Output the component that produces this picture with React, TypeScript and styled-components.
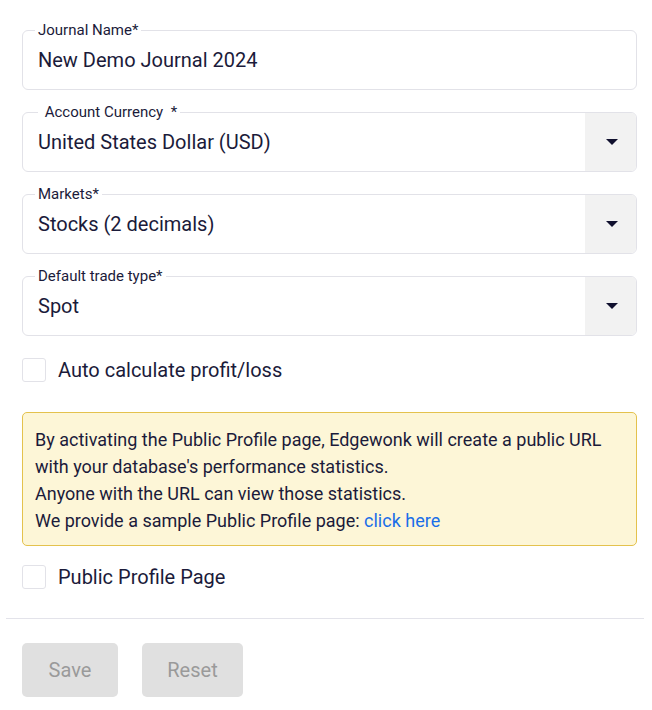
import React, { useState } from "react";
import styled, { createGlobalStyle } from "styled-components";

const GlobalStyle = createGlobalStyle`
  body {
    margin: 0;
    background: #ffffff;
    font-family: Roboto, "Liberation Sans", Arial, sans-serif;
    color: #1b1b3a;
  }
  * {
    box-sizing: border-box;
  }
`;

const Page = styled.div`
  padding: 0 8px 0 6px;
`;

const Form = styled.form`
  padding: 30px 7px 0 16px;
  display: flex;
  flex-direction: column;
`;

const Field = styled.div`
  position: relative;
  margin: 0 0 22px;
  height: 60px;
  border: 1px solid #e2e2e8;
  border-radius: 6px;
  display: flex;
  align-items: stretch;
`;

const Legend = styled.span<{ $indent?: number }>`
  position: absolute;
  top: -11px;
  left: ${(p) => p.$indent ?? 12}px;
  padding: 0 3px;
  background: #ffffff;
  font-size: 15px;
  line-height: 20px;
  color: #1b1b3a;
  white-space: pre;
`;

const Value = styled.div`
  flex: 1;
  display: flex;
  align-items: center;
  padding: 0 15px;
  font-size: 20px;
  color: #1b1b3a;
`;

const Toggle = styled.div`
  width: 51px;
  background: #f2f2f2;
  border-radius: 0 5px 5px 0;
  display: flex;
  align-items: center;
  justify-content: center;
`;

const Arrow = styled.span`
  width: 0;
  height: 0;
  border-left: 6px solid transparent;
  border-right: 6px solid transparent;
  border-top: 6px solid #10102e;
  margin-left: 2px;
`;

const CheckRow = styled.label`
  display: flex;
  align-items: center;
  gap: 12px;
  font-size: 20px;
  color: #1b1b3a;
  cursor: pointer;
`;

const Box = styled.span`
  width: 24px;
  height: 24px;
  border: 1px solid #e2e2e8;
  border-radius: 3px;
  background: #ffffff;
`;

const Notice = styled.div`
  margin: 30px 0 19px;
  padding: 13px 12px 11px;
  background: #fdf6d7;
  border: 1px solid #e4c24d;
  border-radius: 5px;
  font-size: 18px;
  line-height: 27px;
  color: #1b1b3a;
`;

const Link = styled.a`
  color: #1a6ee8;
  text-decoration: none;
`;

const Divider = styled.hr`
  margin: 29px 0 24px;
  border: 0;
  border-top: 1px solid #e3e3ea;
`;

const Actions = styled.div`
  display: flex;
  gap: 24px;
  padding: 0 16px;
`;

const Button = styled.button<{ $width: number }>`
  width: ${(p) => p.$width}px;
  height: 54px;
  border: 0;
  border-radius: 5px;
  background: #e0e0e0;
  color: #9a9a9a;
  font-family: inherit;
  font-size: 20px;
`;

type FieldDef = { label: string; value: string; select?: boolean; indent?: number };

const fields: FieldDef[] = [
  { label: "Journal Name*", value: "New Demo Journal 2024" },
  { label: " Account Currency  *", value: "United States Dollar (USD)", select: true, indent: 15 },
  { label: "Markets*", value: "Stocks (2 decimals)", select: true },
  { label: "Default trade type*", value: "Spot", select: true },
];

export default function App() {
  const [auto, setAuto] = useState(false);
  const [pub, setPub] = useState(false);

  return (
    <Page>
      <GlobalStyle />
      <Form onSubmit={(e) => e.preventDefault()}>
        {fields.map((f) => (
          <Field key={f.label}>
            <Legend $indent={f.indent}>{f.label}</Legend>
            <Value>{f.value}</Value>
            {f.select && (
              <Toggle>
                <Arrow />
              </Toggle>
            )}
          </Field>
        ))}
        <CheckRow onClick={() => setAuto(!auto)}>
          <Box />
          Auto calculate profit/loss
        </CheckRow>
        <Notice>
          By activating the Public Profile page, Edgewonk will create a public URL
          <br />
          with your database's performance statistics.
          <br />
          Anyone with the URL can view those statistics.
          <br />
          We provide a sample Public Profile page: <Link href="#">click here</Link>
        </Notice>
        <CheckRow onClick={() => setPub(!pub)}>
          <Box />
          Public Profile Page
        </CheckRow>
      </Form>
      <Divider />
      <Actions>
        <Button $width={96}>Save</Button>
        <Button $width={101}>Reset</Button>
      </Actions>
    </Page>
  );
}
